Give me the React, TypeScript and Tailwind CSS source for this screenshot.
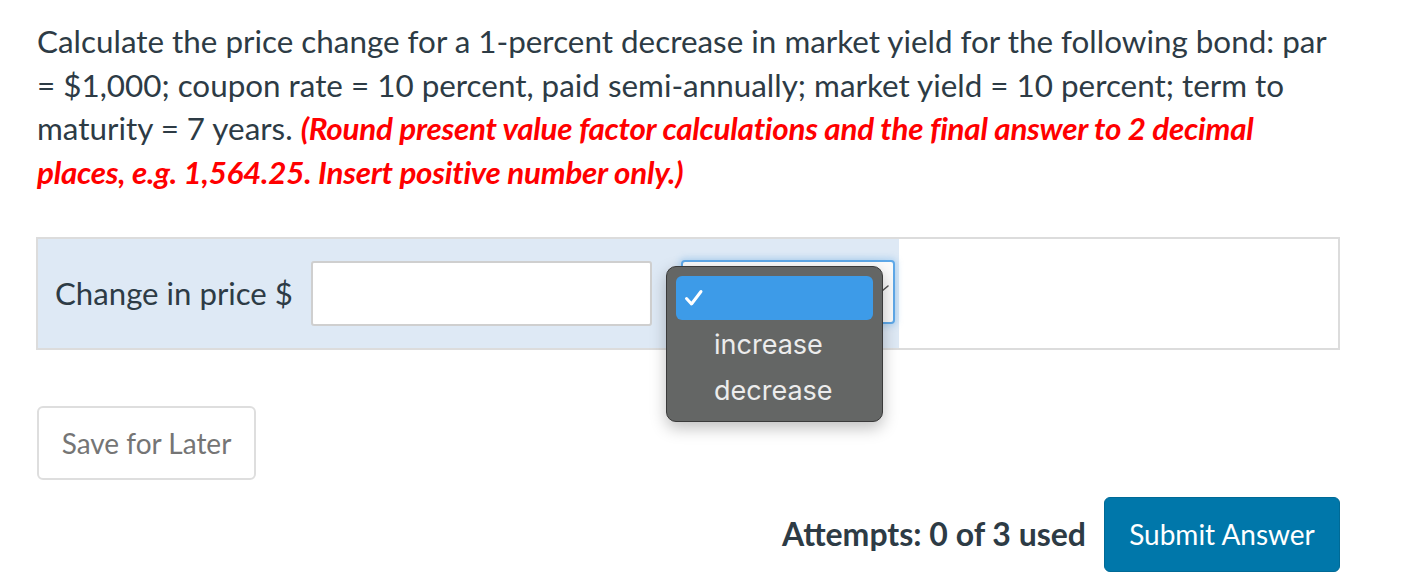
export default function App() {
  return (
    <div className="min-h-[574px] bg-white px-[37px] pt-[20px] font-['Lato',sans-serif] text-[#2d3b45]">
      <p className="w-[1303px] text-[31.4px] leading-[43.7px]">
        Calculate the price change for a 1-percent decrease in market yield for the following bond: par = $1,000; coupon
        rate = 10 percent, paid semi-annually; market yield = 10 percent; term to maturity = 7 years.{" "}
        <span className="font-bold italic tracking-[-0.25px] text-[#ff0000]">
          (Round present value factor calculations and the final answer to 2 decimal
          <br />
          places, e.g. 1,564.25. Insert positive number only.)
        </span>
      </p>

      <div className="ml-[-1px] mt-[42px] flex h-[113px] w-[1304px] border-2 border-[#dcdcdc]">
        <div className="flex w-[861px] items-center bg-[#dee9f5] pl-[17px]">
          <span className="w-[256px] shrink-0 text-[31.2px]">Change in price $</span>
          <div className="h-[65px] w-[341px] rounded-[3px] border-2 border-[#cfcfcf] bg-white" />
          <div className="relative ml-[29px] mt-[-3px] h-[64px] w-[214px] rounded-[4px] border-2 border-[#5ea8e8] bg-[#fbfbfb] shadow-[0_0_6px_2px_rgba(94,168,232,0.35)]">
            <svg className="absolute right-[3px] top-[22px]" width="10" height="10" viewBox="0 0 10 10">
              <path d="M2 7 L8 2" stroke="#555" strokeWidth="1.6" fill="none" strokeLinecap="round" />
            </svg>
            <div className="absolute left-[-17px] top-[4px] z-10 h-[156px] w-[217px] rounded-[10px] border border-[#3a3a3a] bg-[#646665] p-[9px] font-['Inter',sans-serif] shadow-[0_6px_16px_rgba(0,0,0,0.25)]">
              <div className="flex h-[44px] items-center rounded-[6px] bg-[#3d9be8] pl-[8px]">
                <svg width="20" height="18" viewBox="0 0 20 18">
                  <path
                    d="M2.5 9.5 L7.5 15 L17 2.5"
                    stroke="white"
                    strokeWidth="3"
                    fill="none"
                    strokeLinecap="round"
                    strokeLinejoin="round"
                  />
                </svg>
              </div>
              <div className="flex h-[46px] items-center pl-[38px] pt-[4px] text-[27px] text-[#ececec]">increase</div>
              <div className="flex h-[46px] items-center pl-[38px] pt-[4px] text-[27px] text-[#ececec]">decrease</div>
            </div>
          </div>
        </div>
        <div className="flex-1 bg-white" />
      </div>

      <button className="mt-[56px] flex h-[74px] w-[219px] items-center justify-center rounded-[6px] border-2 border-[#dedede] bg-white text-[28px] text-[#757575]">
        Save for Later
      </button>

      <div className="mt-[17px] flex w-[1303px] items-center justify-end">
        <span className="text-[32px] font-bold">Attempts: 0 of 3 used</span>
        <button className="ml-[18px] flex h-[75px] w-[236px] items-center justify-center rounded-[6px] border border-[#006a96] bg-[#0077aa] text-[28px] text-white">
          Submit Answer
        </button>
      </div>
    </div>
  );
}
